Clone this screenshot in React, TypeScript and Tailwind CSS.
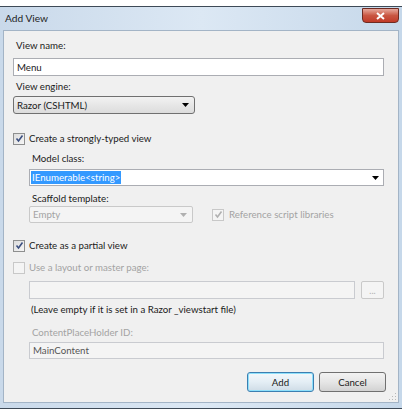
import React from "react";

const font = { fontFamily: 'Lato, "Noto Sans", Arial, sans-serif' };

function Check({ checked, disabled }: { checked?: boolean; disabled?: boolean }) {
  return (
    <div
      className={
        "w-[12px] h-[12px] border flex items-center justify-center shrink-0 " +
        (disabled
          ? "border-[#c8c8c8] bg-[#f4f4f4]"
          : "border-[#8e8f8f] bg-gradient-to-br from-[#dcdcdc] to-[#f6f6f6]")
      }
    >
      {checked && (
        <svg width="9" height="9" viewBox="0 0 9 9">
          <path
            d="M1.5 4.5 L3.5 7 L7.5 1.5"
            fill="none"
            stroke={disabled ? "#b0b0b0" : "#3b4f80"}
            strokeWidth="1.6"
          />
        </svg>
      )}
    </div>
  );
}

function Arrow({ color = "#000" }: { color?: string }) {
  return (
    <svg width="7" height="4" viewBox="0 0 7 4">
      <path d="M0 0 H7 L3.5 4 Z" fill={color} />
    </svg>
  );
}

export default function App() {
  return (
    <div className="w-[402px] h-[416px] bg-white text-[9.7px] leading-[15px] text-[#1a1a1a] overflow-hidden" style={font}>
      <div className="h-[6px]" />
      <div className="border-t border-b border-[#3e4a57] bg-gradient-to-r from-[#c9d9ea] via-[#dce8f4] to-[#c6d8ea] pl-[3px] pr-[3px]">
        {/* title bar */}
        <div className="h-[23px] flex items-start justify-between">
          <div className="pl-[2px] pt-[4px] text-[10.2px] text-[#1e1e1e]">Add View</div>
          <div className="mt-[1px] w-[37px] h-[15px] rounded-b-[4px] border border-[#6e2b22] bg-gradient-to-b from-[#e6a89c] via-[#c95642] to-[#c13a28] flex items-center justify-center">
            <svg width="9" height="8" viewBox="0 0 9 8">
              <path d="M1 1 L8 7 M8 1 L1 7" stroke="#ffffff" strokeWidth="2" />
            </svg>
          </div>
        </div>
        {/* content */}
        <div className="h-[373px] border border-[#a3b4c6] bg-[#f0f0f0] pl-[9px] pr-[14px] relative">
          <div className="mt-[7px] pl-[3px]">View name:</div>
          <div className="mt-[5px] h-[18px] border border-[#abadb3] bg-white flex items-center pl-[3px]">Menu</div>
          <div className="mt-[3px] pl-[3px]">View engine:</div>
          <div className="mt-[2px] w-[182px] h-[18px] border border-[#707070] rounded-[3px] bg-gradient-to-b from-[#f2f2f2] to-[#dcdcdc] flex items-center justify-between pl-[3px] pr-[5px]">
            <span>Razor (CSHTML)</span>
            <Arrow />
          </div>
          <div className="mt-[17px] h-[15px] flex items-center gap-[4px]">
            <Check checked />
            <span>Create a strongly-typed view</span>
          </div>
          <div className="ml-[16px]">
            <div className="mt-[5px] pl-[3px]">Model class:</div>
            <div className="mt-[3px] h-[17px] border border-[#abadb3] bg-white flex items-center justify-between pl-[1px] pr-[4px]">
              <span className="bg-[#3399ff] text-white leading-[13px] px-[1px]">IEnumerable&lt;string&gt;</span>
              <Arrow />
            </div>
            <div className="mt-[5px] pl-[3px]">Scaffold template:</div>
            <div className="flex items-center">
              <div className="w-[164px] h-[17px] border border-[#c9c9c9] rounded-[2px] bg-[#f4f4f4] flex items-center justify-between pl-[3px] pr-[5px] text-[#a3a3a3]">
                <span>Empty</span>
                <Arrow color="#b0b0b0" />
              </div>
              <div className="ml-[19px] flex items-center gap-[5px] text-[#a3a3a3]">
                <Check checked disabled />
                <span>Reference script libraries</span>
              </div>
            </div>
          </div>
          <div className="mt-[15px] h-[15px] flex items-center gap-[4px]">
            <Check checked />
            <span>Create as a partial view</span>
          </div>
          <div className="mt-[7px] h-[15px] flex items-center gap-[4px] text-[#a3a3a3]">
            <Check disabled />
            <span>Use a layout or master page:</span>
          </div>
          <div className="ml-[16px]">
            <div className="mt-[6px] flex items-center gap-[6px]">
              <div className="flex-1 h-[18px] border border-[#c9cbd0] bg-[#f4f4f4]" />
              <div className="w-[23px] h-[18px] border border-[#c9c9c9] rounded-[2px] bg-[#f4f4f4] flex items-center justify-center text-[#b0b0b0] text-[9px] leading-[9px]">...</div>
            </div>
            <div className="mt-[3px] pl-[2px]">(Leave empty if it is set in a Razor _viewstart file)</div>
            <div className="mt-[8px] pl-[3px] text-[#a3a3a3]">ContentPlaceHolder ID:</div>
            <div className="mt-[2px] h-[17px] border border-[#c9cbd0] bg-[#f4f4f4] flex items-center pl-[3px] text-[#555]">MainContent</div>
          </div>
          <div className="mt-[13px] flex justify-end gap-[5px]">
            <div className="w-[67px] h-[20px] rounded-[3px] border border-[#3c7fb1] shadow-[inset_0_0_0_1px_#8ee0fb] bg-gradient-to-b from-[#f4f8fb] via-[#e4eef5] to-[#cfdce6] flex items-center justify-center">Add</div>
            <div className="w-[67px] h-[20px] rounded-[3px] border border-[#707070] bg-gradient-to-b from-[#f2f2f2] via-[#e6e6e6] to-[#d2d2d2] flex items-center justify-center -mr-[2px]">Cancel</div>
          </div>
          <div className="absolute right-[1px] bottom-[1px]">
            <svg width="8" height="8" viewBox="0 0 8 8">
              <rect x="6" y="0" width="1" height="1" fill="#b8b8b8" />
              <rect x="6" y="3" width="1" height="1" fill="#b8b8b8" />
              <rect x="3" y="3" width="1" height="1" fill="#b8b8b8" />
              <rect x="6" y="6" width="1" height="1" fill="#b8b8b8" />
              <rect x="3" y="6" width="1" height="1" fill="#b8b8b8" />
              <rect x="0" y="6" width="1" height="1" fill="#b8b8b8" />
            </svg>
          </div>
        </div>
        <div className="h-[5px]" />
      </div>
    </div>
  );
}
